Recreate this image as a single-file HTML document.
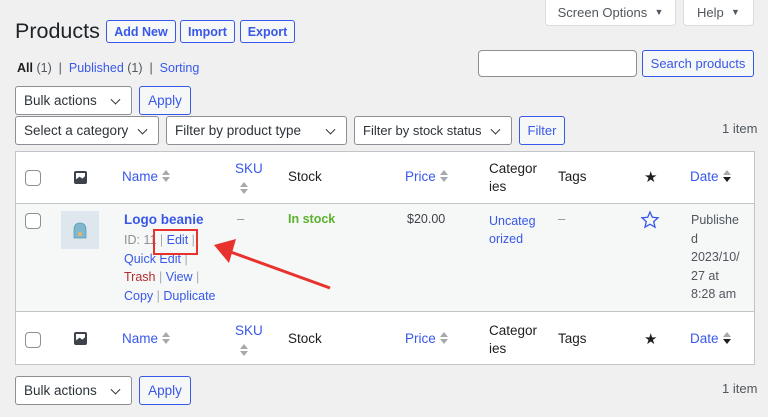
<!DOCTYPE html>
<html><head><meta charset="utf-8"><style>
*{box-sizing:border-box;margin:0;padding:0}
body{width:768px;height:417px;background:#f0f0f1;font-family:"Liberation Sans",sans-serif;font-size:13px;color:#1e1e1e;position:relative;overflow:hidden}
.a{position:absolute;white-space:nowrap}
.b{color:#3858e9}
.btn{position:absolute;border:1px solid #3858e9;border-radius:3px;background:#f6f7f7;color:#3858e9;font-size:13px;display:flex;align-items:center;justify-content:center}
.sel{position:absolute;border:1px solid #8c8f94;border-radius:3px;background:#fff;font-size:13.5px;color:#2c3338;display:flex;align-items:center;padding-left:8px}
.sel:after{content:"";position:absolute;right:12px;top:50%;width:6px;height:6px;border-right:1.5px solid #2c3338;border-bottom:1.5px solid #2c3338;transform:translateY(-70%) rotate(45deg)}
.cb{position:absolute;width:16px;height:16px;border:1px solid #8c8f94;border-radius:4px;background:#fff}
.sort{display:inline-block;vertical-align:middle;margin-left:4px;width:8px;height:14px;position:relative}
.sort:before{content:"";position:absolute;left:0;top:0;border:4px solid transparent;border-bottom:5px solid #a7aaad;border-top:0}
.sort:after{content:"";position:absolute;left:0;top:7px;border:4px solid transparent;border-top:5px solid #a7aaad;border-bottom:0}
.sort.d:after{border-top-color:#1e1e1e}
.img{position:absolute;width:13px;height:13px;background:#3c434a;border-radius:2px}
.img:after{content:"";position:absolute;left:2px;top:2px;width:9px;height:8px;background:#fff;clip-path:polygon(0 0,100% 0,100% 40%,70% 70%,40% 45%,0 80%)}
.h{font-size:13.5px}
</style></head><body>
<div class="a" style="left:545px;top:-2px;width:131px;height:28px;background:#fff;border:1px solid #dcdcde;border-radius:0 0 4px 4px;color:#50575e;font-size:13px;display:flex;align-items:center;justify-content:center">Screen Options&nbsp;&nbsp;<span style="font-size:9px">▼</span></div>
<div class="a" style="left:683px;top:-2px;width:71px;height:28px;background:#fff;border:1px solid #dcdcde;border-radius:0 0 4px 4px;color:#50575e;font-size:13px;display:flex;align-items:center;justify-content:center">Help&nbsp;&nbsp;<span style="font-size:9px">▼</span></div>

<div class="a" style="left:15px;top:19px;font-size:21.5px;color:#1d2327">Products</div>
<div class="btn" style="left:106px;top:20px;width:70px;height:23px;font-weight:bold;font-size:12.5px">Add New</div>
<div class="btn" style="left:180px;top:20px;width:55px;height:23px;font-weight:bold;font-size:12.5px">Import</div>
<div class="btn" style="left:240px;top:20px;width:55px;height:23px;font-weight:bold;font-size:12.5px">Export</div>

<div class="a" style="left:17px;top:61px;font-size:12.5px;color:#50575e"><b style="color:#1e1e1e">All</b> (1) &nbsp;| &nbsp;<span class="b">Published</span> (1) &nbsp;| &nbsp;<span class="b">Sorting</span></div>

<div class="a" style="left:478px;top:50px;width:159px;height:27px;background:#fff;border:1px solid #8c8f94;border-radius:4px"></div>
<div class="btn" style="left:642px;top:50px;width:112px;height:27px">Search products</div>

<div class="sel" style="left:15px;top:86px;width:117px;height:29px">Bulk actions</div>
<div class="btn" style="left:139px;top:86px;width:52px;height:29px;font-size:13.5px">Apply</div>

<div class="sel" style="left:15px;top:116px;width:144px;height:29px">Select a category</div>
<div class="sel" style="left:166px;top:116px;width:181px;height:29px">Filter by product type</div>
<div class="sel" style="left:354px;top:116px;width:158px;height:29px;font-size:13px">Filter by stock status</div>
<div class="btn" style="left:519px;top:116px;width:46px;height:29px">Filter</div>
<div class="a" style="left:722px;top:121px;color:#50575e">1 item</div>

<div class="a" style="left:15px;top:151px;width:740px;height:214px;border:1px solid #c3c4c7;background:#fff"></div>
<div class="a" style="left:16px;top:203px;width:738px;height:109px;background:#f6f7f7;border-top:1px solid #c3c4c7;border-bottom:1px solid #c3c4c7"></div>

<div class="cb" style="left:25px;top:170px"></div>
<div class="img" style="left:74px;top:171px"></div>
<div class="a b h" style="left:122px;top:169px">Name<span class="sort"></span></div>
<div class="a b h" style="left:235px;top:161px">SKU</div>
<div class="a" style="left:240px;top:180px"><span class="sort" style="margin:0"></span></div>
<div class="a h" style="left:288px;top:169px">Stock</div>
<div class="a b h" style="left:405px;top:169px">Price<span class="sort"></span></div>
<div class="a h" style="left:489px;top:160px;line-height:18px">Categor<br>ies</div>
<div class="a h" style="left:558px;top:169px">Tags</div>
<div class="a" style="left:644px;top:168px;font-size:15px">★</div>
<div class="a b h" style="left:690px;top:169px">Date<span class="sort d"></span></div>

<div class="cb" style="left:25px;top:213px"></div>
<div class="a" style="left:61px;top:211px;width:38px;height:38px;background:#dfe7ee"><svg width="38" height="38"><path d="M13 27 V19 Q13 12 19 12 Q25 12 25 19 V27 Z" fill="#7fb8cc" stroke="#5a9ab0" stroke-width=".8"/><circle cx="19" cy="23" r="2" fill="#e8b070"/></svg></div>
<div class="a b" style="left:124px;top:212px;font-size:13.5px;font-weight:bold">Logo beanie</div>
<div class="a" style="left:124px;top:231px;line-height:18.5px;font-size:12.5px;color:#a7aaad"><span style="color:#8c8f94">ID: 11</span> | <span class="b">Edit</span> |<br><span class="b">Quick Edit</span> |<br><span style="color:#b32d2e">Trash</span> | <span class="b">View</span> |<br><span class="b">Copy</span> | <span class="b">Duplicate</span></div>
<div class="a" style="left:153px;top:229px;width:45px;height:26px;border:2.5px solid #e8322e"></div>
<div class="a" style="left:237px;top:211px;color:#8c8f94">–</div>
<div class="a" style="left:288px;top:212px;color:#5bb22f;font-weight:bold;font-size:12.5px">In stock</div>
<div class="a" style="left:407px;top:212px;color:#3c434a;font-size:12.5px">$20.00</div>
<div class="a b" style="left:489px;top:212px;line-height:18px;font-size:12.5px">Uncateg<br>orized</div>
<div class="a" style="left:558px;top:211px;color:#8c8f94">–</div>
<div class="a" style="left:640px;top:210px"><svg width="20" height="20" viewBox="0 0 20 20"><path d="M10 2 L12.3 7.3 L18 7.8 L13.7 11.6 L15 17.2 L10 14.2 L5 17.2 L6.3 11.6 L2 7.8 L7.7 7.3 Z" fill="none" stroke="#3858e9" stroke-width="1.3"/></svg></div>
<div class="a" style="left:691px;top:211px;line-height:18.5px;color:#50575e;font-size:12.5px">Publishe<br>d<br>2023/10/<br>27 at<br>8:28 am</div>

<svg class="a" style="left:0;top:0" width="768" height="417"><line x1="330" y1="288" x2="228" y2="251" stroke="#e8322e" stroke-width="3"/><polygon points="214,245 236,239 229,263" fill="#e8322e"/></svg>

<div class="cb" style="left:25px;top:332px"></div>
<div class="img" style="left:74px;top:332px"></div>
<div class="a b h" style="left:122px;top:331px">Name<span class="sort"></span></div>
<div class="a b h" style="left:235px;top:323px">SKU</div>
<div class="a" style="left:240px;top:342px"><span class="sort" style="margin:0"></span></div>
<div class="a h" style="left:288px;top:331px">Stock</div>
<div class="a b h" style="left:405px;top:331px">Price<span class="sort"></span></div>
<div class="a h" style="left:489px;top:322px;line-height:18px">Categor<br>ies</div>
<div class="a h" style="left:558px;top:331px">Tags</div>
<div class="a" style="left:644px;top:330px;font-size:15px">★</div>
<div class="a b h" style="left:690px;top:331px">Date<span class="sort d"></span></div>

<div class="sel" style="left:15px;top:376px;width:117px;height:29px">Bulk actions</div>
<div class="btn" style="left:139px;top:376px;width:52px;height:29px;font-size:13.5px">Apply</div>
<div class="a" style="left:722px;top:381px;color:#50575e">1 item</div>
</body></html>
